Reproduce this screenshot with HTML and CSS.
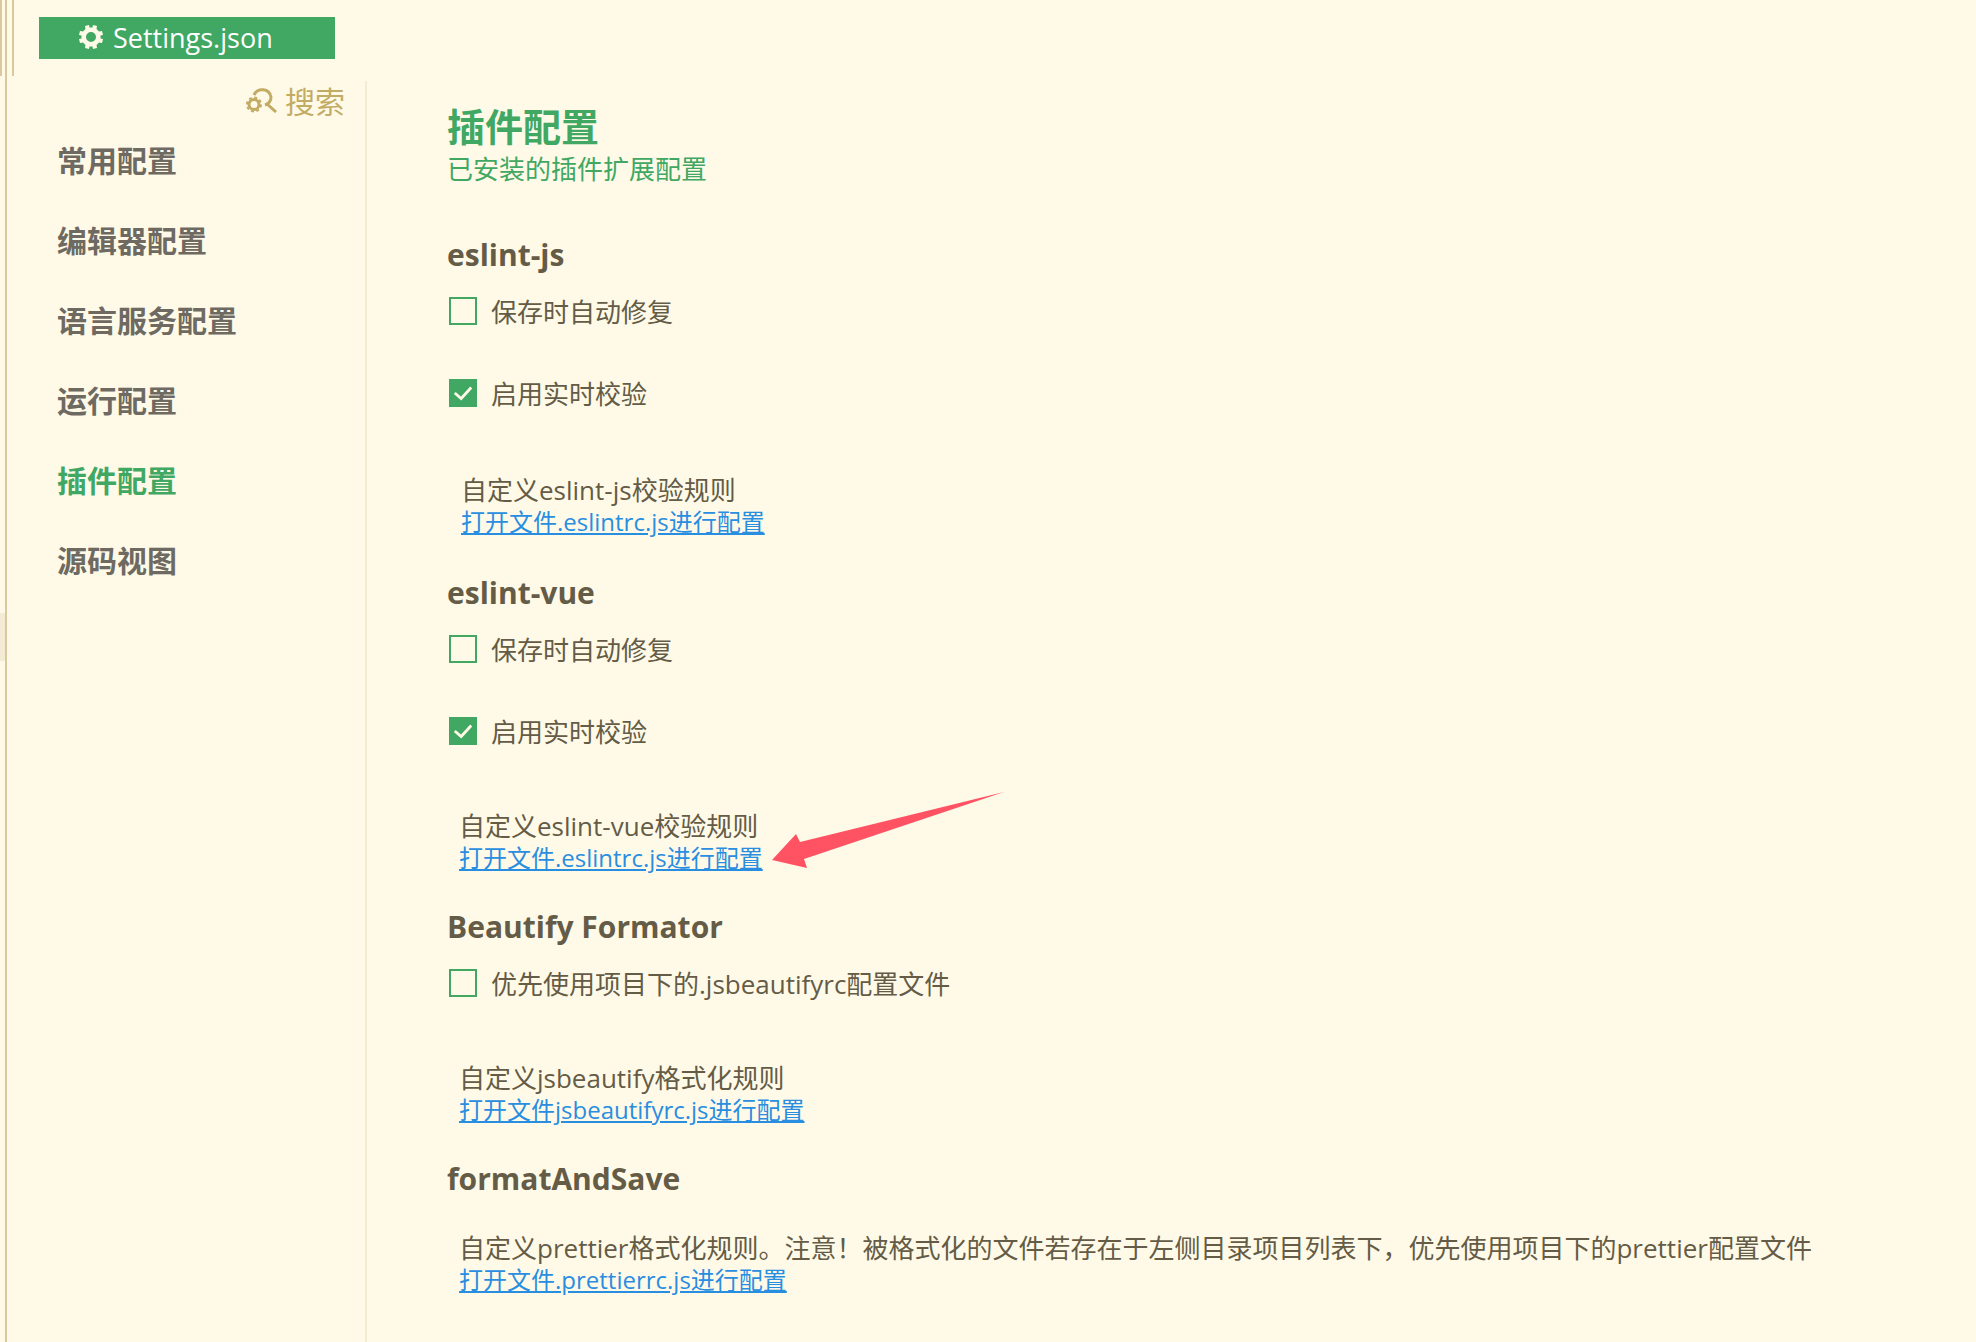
FILE: index.html
```html
<!DOCTYPE html>
<html lang="zh-CN">
<head>
  <meta charset="UTF-8" />
  <meta name="viewport" content="width=device-width, initial-scale=1.0" />
  <title>Settings.json</title>
  <link rel="stylesheet" href="styles.css">
</head>
<body>
  <!-- 左侧分隔条 -->
  <div class="gutter">
    <div class="gutter-top"></div>
    <div class="gutter-handle"></div>
  </div>

  <div class="window">
    <header class="tab-bar">
      <button type="button" class="tab">
        <svg class="tab-icon" viewBox="-12 -12 24 24" aria-hidden="true">
          <path fill-rule="evenodd" d="M-2 -12 L-1.500 -9.500 L1.500 -9.500 L2 -12 L6 -11 L5.500 -8 L8 -5.500 L11 -6 L12 -2 L9.500 -1.500 L9.500 1.500 L12 2 L11 6 L8 5.500 L5.500 8 L6 11 L2 12 L1.500 9.500 L-1.500 9.500 L-2 12 L-6 11 L-5.500 8 L-8 5.500 L-11 6 L-12 2 L-9.500 1.500 L-9.500 -1.500 L-12 -2 L-11 -6 L-8 -5.500 L-5.500 -8 L-6 -11 Z M5 0 A5 5 0 1 0 -5 0 A5 5 0 1 0 5 0 Z" />
        </svg>
        <span>Settings.json</span>
      </button>
    </header>

    <div class="settings">
      <aside class="sidebar">
        <button type="button" class="search">
          <svg class="search-icon" viewBox="0 0 32 26" aria-hidden="true">
            <path d="M8 8 A9 9 0 0 1 25 10 Q25 16 19 18 M20 16 L30 25" />
            <circle cx="8" cy="17.500" r="5" />
            <circle class="teeth" cx="8" cy="17.500" r="7" />
          </svg>
          <span>搜索</span>
        </button>
        <nav class="nav">
          <a href="#common">常用配置</a>
          <a href="#editor">编辑器配置</a>
          <a href="#language">语言服务配置</a>
          <a href="#run">运行配置</a>
          <a href="#plugins" class="active">插件配置</a>
          <a href="#source">源码视图</a>
        </nav>
      </aside>

      <main class="content" id="plugins">
        <h1>插件配置</h1>
        <p class="subtitle">已安装的插件扩展配置</p>

        <section class="group">
          <h2>eslint-js</h2>
          <div class="options">
            <label class="option"><input type="checkbox" /><span>保存时自动修复</span></label>
            <label class="option"><input type="checkbox" checked /><span>启用实时校验</span></label>
          </div>
          <div class="note current">
            <p>自定义eslint-js校验规则</p>
            <a href="#eslintrc-js">打开文件.eslintrc.js进行配置</a>
          </div>
        </section>

        <section class="group">
          <h2>eslint-vue</h2>
          <div class="options">
            <label class="option"><input type="checkbox" /><span>保存时自动修复</span></label>
            <label class="option"><input type="checkbox" checked /><span>启用实时校验</span></label>
          </div>
          <div class="note">
            <p>自定义eslint-vue校验规则</p>
            <a href="#eslintrc-vue">打开文件.eslintrc.js进行配置</a>
            <svg class="arrow" viewBox="0 0 232 76" aria-hidden="true">
              <path d="M0 68 L24 42 L28 50 L232 0 L32 67 L35 76 Z" />
            </svg>
          </div>
        </section>

        <section class="group">
          <h2>Beautify Formator</h2>
          <div class="options">
            <label class="option"><input type="checkbox" /><span>优先使用项目下的.jsbeautifyrc配置文件</span></label>
          </div>
          <div class="note">
            <p>自定义jsbeautify格式化规则</p>
            <a href="#jsbeautifyrc">打开文件jsbeautifyrc.js进行配置</a>
          </div>
        </section>

        <section class="group">
          <h2>formatAndSave</h2>
          <div class="note">
            <p>自定义prettier格式化规则。注意！被格式化的文件若存在于左侧目录项目列表下，优先使用项目下的prettier配置文件</p>
            <a href="#prettierrc">打开文件.prettierrc.js进行配置</a>
          </div>
        </section>
      </main>
    </div>
  </div>
</body>
</html>
```

FILE: styles.css
```css
* {
  box-sizing: border-box;
}
body {
  display: flex;
  min-height: 100vh;
  margin: 0;
  background-color: #fffae8;
  color: #645c46;
  font-family: 'Open Sans', 'Noto Sans CJK SC', sans-serif;
  font-size: 26px;
  line-height: 32px;
}
h1, h2, p {
  margin: 0;
}
button {
  border: none;
  font-family: inherit;
  cursor: pointer;
}

/* 左侧分隔条 */
.gutter {
  flex: none;
  width: 7px;
  border-right: 2px solid #d9c99d;
}
.gutter-top {
  height: 76px;
  border-left: 2px solid #d9c99d;
}
.gutter-handle {
  height: 48px;
  margin-top: 537px;
  background-color: #f3ebd4;
}

.window {
  display: flex;
  flex: 1;
  flex-direction: column;
  min-width: 0;
}

/* 标签栏 */
.tab-bar {
  height: 76px;
  margin-left: 5px;
  padding: 17px 25px;
  border-left: 2px solid #d9c99d;
}
.tab {
  display: flex;
  align-items: center;
  gap: 10px;
  width: 296px;
  height: 42px;
  padding: 0 40px 2px;
  background-color: #41a863;
  color: #fff;
  font-size: 27px;
}
.tab-icon {
  width: 24px;
  height: 24px;
  fill: #fffae8;
}

.settings {
  display: flex;
  flex: 1;
  margin-top: 5px;
}

/* 侧边导航 */
.sidebar {
  flex: none;
  width: 360px;
  border-right: 2px solid #f3ebd4;
}
.search {
  display: flex;
  align-items: center;
  gap: 7px;
  height: 40px;
  margin-left: auto;
  padding: 0 20px 2px;
  background: none;
  color: #c2ac64;
  font-size: 30px;
}
.search-icon {
  width: 32px;
  height: 26px;
  fill: none;
  stroke: #c2ac64;
  stroke-width: 3;
}
.search-icon .teeth {
  stroke-width: 2;
  stroke-dasharray: 3 2.5;
}
.nav a {
  display: block;
  padding-left: 50px;
  color: #6e6a62;
  font-size: 30px;
  font-weight: bold;
  line-height: 80px;
  text-decoration: none;
}
.nav .active {
  color: #41a863;
}

/* 配置内容 */
.content {
  flex: 1;
  padding: 21px 80px 40px;
}
h1 {
  color: #41a863;
  font-size: 38px;
  line-height: 48px;
}
.subtitle {
  margin-bottom: 47px;
  color: #41a863;
  line-height: 38px;
}
.group {
  margin-bottom: 33px;
}
h2 {
  font-size: 30px;
  line-height: 40px;
}
.options {
  display: flex;
  flex-direction: column;
  align-items: flex-start;
  gap: 42px;
  margin: 16px 0 59px;
}
.option {
  display: flex;
  align-items: center;
  gap: 14px;
  height: 40px;
  padding-left: 2px;
}
.option span {
  padding-top: 2px;
}
.option input {
  width: 28px;
  height: 28px;
  margin: 0;
  border: 2px solid #41a863;
  appearance: none;
}
.option input:checked {
  background: #41a863 url("data:image/svg+xml,%3Csvg xmlns='http://www.w3.org/2000/svg' viewBox='0 0 24 24'%3E%3Cpath d='M3 12l7 6L21 6' fill='none' stroke='%23fffae8' stroke-width='3'/%3E%3C/svg%3E") center / 22px no-repeat;
}
.note {
  position: relative;
  margin-left: 12px;
}
h2 + .note {
  margin-top: 33px;
}
.note.current {
  border: 2px solid transparent;
}
.note a {
  display: block;
  width: fit-content;
  color: #2a8ee0;
  font-size: 24px;
}
/* 指向链接的箭头 */
.arrow {
  position: absolute;
  top: -18px;
  left: 313px;
  width: 232px;
  height: 76px;
  fill: #ff5263;
}
```
